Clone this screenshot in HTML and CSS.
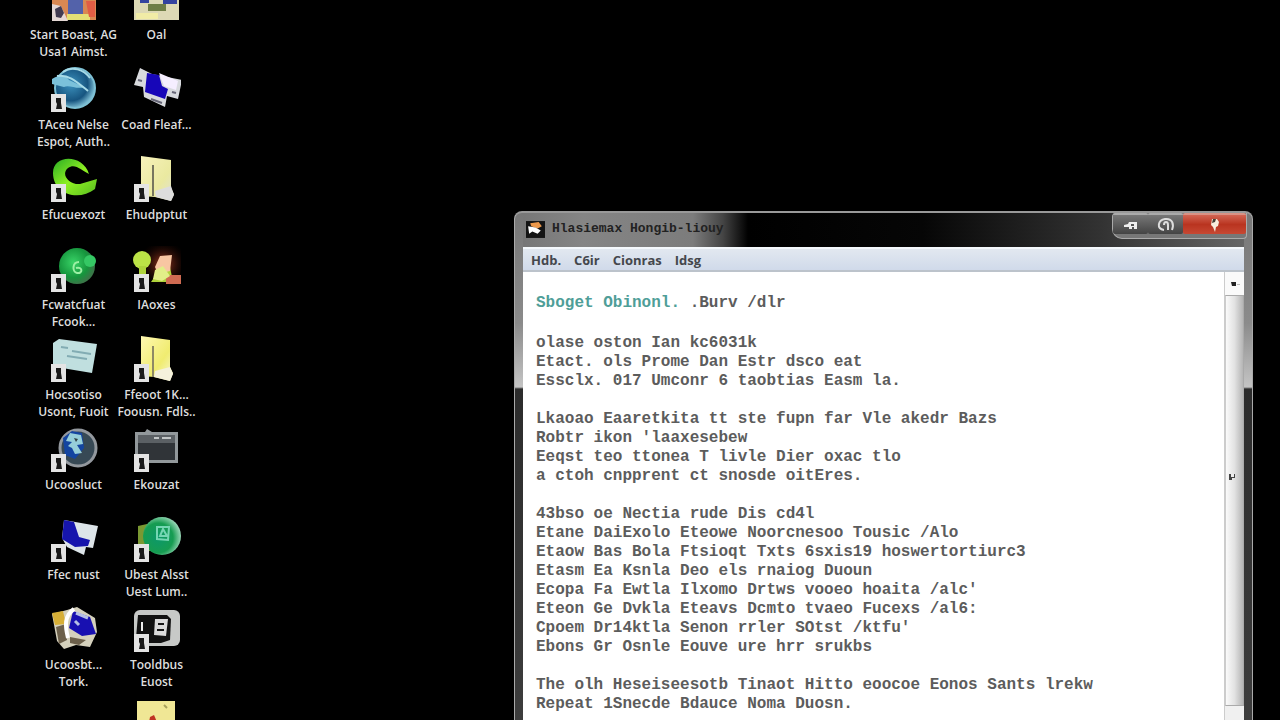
FILE: index.html
```html
<!DOCTYPE html>
<html lang="en">
<head>
<meta charset="utf-8">
<title>Desktop</title>
<link rel="stylesheet" href="styles.css">
</head>
<body>
<svg class="defs" aria-hidden="true">
  <defs>
    <radialGradient id="blue" cx=".4" cy=".4" r=".6"><stop offset="0" stop-color="#3c91bd"/><stop offset=".7" stop-color="#175580"/><stop offset="1" stop-color="#79b9d0"/></radialGradient>
    <radialGradient id="green" cx=".4" cy=".4" r=".6"><stop offset="0" stop-color="#38d266"/><stop offset=".7" stop-color="#16953d"/><stop offset="1" stop-color="#397747"/></radialGradient>
    <radialGradient id="teal" cx=".4" cy=".55" r=".65"><stop offset="0" stop-color="#0c986a"/><stop offset=".6" stop-color="#169c51"/><stop offset="1" stop-color="#b5e4cd"/></radialGradient>
    <radialGradient id="glow"><stop offset="0" stop-color="#a33c22"/><stop offset="1" stop-color="#220500" stop-opacity="0"/></radialGradient>
    <linearGradient id="paper" x2="1" y2="1"><stop offset="0" stop-color="#f7f2bb"/><stop offset=".6" stop-color="#eae9a0"/><stop offset="1" stop-color="#dedfd8"/></linearGradient>
    <linearGradient id="yellow" x2="1" y2="1"><stop offset="0" stop-color="#fff8b2"/><stop offset=".6" stop-color="#f0ec70"/><stop offset="1" stop-color="#f8f7db"/></linearGradient>
    <linearGradient id="lime" x2="1" y2="1"><stop offset="0" stop-color="#2aac24"/><stop offset=".5" stop-color="#8ff022"/><stop offset="1" stop-color="#58bd20"/></linearGradient>
    <g id="arrow"><path fill="#e4e4e4" d="M1 28h15v18H1z"/><path fill="#1b1b1b" d="M6 32h5v5l1 6H6l1-5-1-2z"/></g>
  </defs>
</svg>
<main class="desktop">
  <nav class="icons" aria-label="Desktop icons">
    <button class="item"><svg viewBox="0 0 48 48"><path fill="#d98852" d="M2 20h44v24H2z"/><path fill="#5362aa" d="M18 20h15v18H18z"/><path fill="#e4df75" d="M17 38h23v6H17z"/><path fill="#e5d8d5" d="M2 28l9 2 7 15H2z"/><path fill="#423b51" d="M5 33l6-3 3 7-3 5-5-1z"/><path fill="#e15d45" d="M36 25h9v16h-6z"/></svg><span>Start Boast, AG<br>Usa1 Aimst.</span></button>
    <button class="item"><svg viewBox="0 0 48 48"><path fill="#ddd9b5" d="M1 20h45v24H1z"/><path fill="#34439f" d="M30 20h14v8H30zM7 24h9v3H7z"/><path fill="#6f7e46" d="M15 28h18v7H15z"/><path fill="#f1eca6" d="M3 37h22v6H3z"/></svg><span>Oal</span></button>

    <button class="item"><svg viewBox="0 0 48 48"><circle cx="25" cy="22" r="20" fill="url(#blue)" stroke="#7ec1d5" stroke-width="2"/><path fill="#7bc1da" d="M2 13c8-5 14-4 17 1l15 7c-7 3-15-3-20 0L2 18z"/><path fill="none" stroke="#a7dbe8" stroke-width="2" d="M7 10c12-2 20 6 31 15M13 6c9-7 21-2 27 6"/><use href="#arrow"/></svg><span>TAceu Nelse<br>Espot, Auth..</span></button>
    <button class="item"><svg viewBox="0 0 48 48"><path fill="#d8dade" d="M7 2l12 6 30 6-4 19-11-3-2 11-21-10-1-10-9-2z"/><path fill="#1706b8" d="M14 7l12 2 3 11 6 3-3 10-20-7z"/><path fill="#f5eeff" d="M26 7l19 8-2 9-12-4z"/><path fill="none" stroke="#667" stroke-width="2" d="M5 14l4 1M39 26l4 1M18 33l11 4"/></svg><span>Coad Fleaf...</span></button>

    <button class="item"><svg viewBox="0 0 48 48"><path fill="url(#lime)" d="M39 18C33-2 3-2 3 17c0 21 25 29 42 16l2-10-17 5c-10 1-20-9-12-16 7-5 13 2 21 6z"/><use href="#arrow"/></svg><span>Efucuexozt</span></button>
    <button class="item"><svg viewBox="0 0 48 48"><path fill="url(#paper)" d="M8 0l30 4v28l3 6-3 7-16-4-14-1z"/><path fill="none" stroke="#77765f" stroke-width="2" d="M20 9v31"/><path fill="#ddd" d="M22 35l16-5 3 9-3 6-15-4z"/><use href="#arrow"/></svg><span>Ehudpptut</span></button>

    <button class="item"><svg viewBox="0 0 48 48"><circle cx="27" cy="20" r="18" fill="url(#green)"/><circle cx="40" cy="15" r="6" fill="#35c864"/><path fill="none" stroke="#9cf0a4" stroke-width="2" d="M29 16c-7 0-7 10-2 11 6 1 6-7-1-5"/><use href="#arrow"/></svg><span>Fcwatcfuat<br>Fcook...</span></button>
    <button class="item"><svg viewBox="0 0 48 48"><ellipse cx="30" cy="18" rx="25" ry="23" fill="url(#glow)"/><circle cx="9" cy="14" r="9" fill="#bce346"/><path fill="#afd33b" d="M6 20h7v15H6zM25 26l12-5 3 15H18z"/><path fill="#f8c6a2" d="M27 10l12-1-2 16-12 3-3-7z"/><path fill="#cf6b52" d="M33 29h16v9H33z"/><path fill="#e2ee88" d="M22 24l8-4 7 10-8 5-9-2z"/><use href="#arrow"/></svg><span>IAoxes</span></button>

    <button class="item"><svg viewBox="0 0 48 48"><path fill="#c0dfdf" d="M3 7l6-4 38 5-5 29-24-4L3 30z"/><path fill="none" stroke="#82acb3" stroke-width="2" d="M11 11l7 1M22 15l19 3M17 20l20 3"/><use href="#arrow"/></svg><span>Hocsotiso<br>Usont, Fuoit</span></button>
    <button class="item"><svg viewBox="0 0 48 48"><path fill="url(#yellow)" d="M8 0l29 4v27l3 6-3 8-16-4-13-1z"/><path fill="none" stroke="#8e8965" stroke-width="2" d="M20 10v31"/><path fill="#f5f2dc" d="M22 35l15-4 3 7-3 7-16-4z"/><use href="#arrow"/></svg><span>Ffeoot 1K...<br>Foousn. Fdls..</span></button>

    <button class="item"><svg viewBox="0 0 48 48"><circle cx="28" cy="22" r="18" fill="#374955" stroke="#93989e" stroke-width="3"/><path fill="#1445a0" d="M13 12l9-7 10 2 2 15-9 11-10-4z"/><path fill="#96ced9" d="M20 7l11 2 2 9-6 1 5 8-7 1-3-6-4-2 4-4-6-1z"/><path fill="#304044" d="M24 12l4 1-2 3z"/><use href="#arrow"/></svg><span>Ucoosluct</span></button>
    <button class="item"><svg viewBox="0 0 48 48"><path fill="#92989b" d="M2 6h10l2-3 5 3h26v31H2z"/><path fill="#303438" d="M5 13h37v21H5z"/><path fill="#5b6064" d="M5 9h37v8H5z"/><path stroke="#c2c5c6" stroke-width="2" d="M21 12h5M29 12h9"/><use href="#arrow"/></svg><span>Ekouzat</span></button>

    <button class="item"><svg viewBox="0 0 48 48"><path fill="#dde5e9" d="M14 4l34 6-5 22-7-1-2 8-17-8-5-9z"/><path fill="#1615ad" d="M14 4l10 2 5 15 11 3-2 6-13 1-13-8z"/><use href="#arrow"/></svg><span>Ffec nust</span></button>
    <button class="item"><svg viewBox="0 0 48 48"><path fill="#7a9832" d="M5 10l9-2 10 5 1 22H5z"/><circle cx="29" cy="20" r="19" fill="url(#teal)"/><path fill="none" stroke="#75d6b3" stroke-width="2" d="M24 11h12l-1 13-11-1zM30 13l-3 7h7z"/><use href="#arrow"/></svg><span>Ubest Alsst<br>Uest Lum..</span></button>

    <button class="item"><svg viewBox="0 0 48 48"><path fill="#d5d1bd" d="M2 8l15-4 10-3 18 11 2 14-7 15-14-2-12 4-7-8z"/><path fill="#d7af37" d="M2 7l11-2 3 13-11 1z"/><path fill="#1810b1" d="M23 5l17 6 6 17-14 2-13-8z"/><path fill="#6c604b" d="M6 21l10-3 1 16-8 4zM20 31l16 3-7 5-9-2z"/><path fill="none" stroke="#fff" stroke-width="4" d="M24 3c-10 7-9 17-6 29"/><path fill="none" stroke="#b5bfe6" stroke-width="3" d="M26 7l12 5M25 15l4 4"/></svg><span>Ucoosbt...<br>Tork.</span></button>
    <button class="item"><svg viewBox="0 0 48 48"><rect x="1" y="4" width="46" height="36" rx="6" fill="#c7c9c7"/><path fill="#111" d="M5 9h29l4 4-1 21-9 3H8l-5-5z"/><path fill="#dadada" d="M22 13h13l-2 17-12-1z"/><path fill="#151515" d="M25 17h6v2h-6zM24 23h7v2h-7z"/><path fill="none" stroke="#eee" stroke-width="2" d="M9 16v9"/><use href="#arrow"/></svg><span>Tooldbus<br>Euost</span></button>

    <i></i>
    <button class="item" aria-label="Note"><svg viewBox="0 0 48 48"><path fill="#f0e795" d="M4 5h38v43H4z"/><path fill="#bf3424" d="M17 21l4-2 3 7h-8z"/><path fill="none" stroke="#a8a05b" stroke-width="2" d="M31 9l3 3"/></svg></button>
  </nav>

  <section class="window" aria-label="Console">
    <header class="titlebar">
      <div class="caption">
        <svg class="appicon" viewBox="0 0 18 16"><path fill="#141414" d="M0 0h18v16H0z"/><path fill="#ee994b" d="M4 2l8-1 3 4-4 2-6-2z"/><path fill="#fff" d="M2 5l7 1 5 3-3 3-5-2-3 2z"/></svg>
        <h1>Hlasiemax Hongib-liouy</h1>
      </div>
      <div class="controls">
        <button aria-label="Minimize"><svg viewBox="0 0 18 16"><path fill="#eee" d="M2 8l4-1 1-2h8v7h-3v-2h-2v2H7v-2H2z"/><path fill="#555" d="M9 7h3v2H9z"/></svg></button>
        <button aria-label="Maximize"><svg viewBox="0 0 18 16"><path fill="none" stroke="#ddd" stroke-width="2" d="M7 13C-1 12 1 3 8 2c8-1 9 6 7 11M7 8c0-4 4-4 4 0v5"/></svg></button>
        <button class="close" aria-label="Close"><svg viewBox="0 0 18 16"><path fill="#f8eddd" d="M6 2h5l2 3-1 4-2 1-1 5-2-5-2-2z"/><path fill="#464036" d="M7 2h3L9 5 6 6z"/></svg></button>
      </div>
    </header>
    <div class="client">
      <nav class="menu" aria-label="Menu"><button>Hdb.</button><button>C6ir</button><button>Cionras</button><button>Idsg</button></nav>
      <div class="view">
        <div class="document">
<p class="heading"><span>Sboget Obinonl.</span> .Burv /dlr</p>
<pre>olase oston Ian kc6031k
Etact. ols Prome Dan Estr dsco eat
Essclx. 017 Umconr 6 taobtias Easm la.

Lkaoao Eaaretkita tt ste fupn far Vle akedr Bazs
Robtr ikon 'laaxesebew
Eeqst teo ttonea T livle Dier oxac tlo
a ctoh cnpprent ct snosde oitEres.

43bso oe Nectia rude Dis cd4l
Etane DaiExolo Eteowe Noorcnesoo Tousic /Alo
Etaow Bas Bola Ftsioqt Txts 6sxis19 hoswertortiurc3
Etasm Ea Ksnla Deo els rnaiog Duoun
Ecopa Fa Ewtla Ilxomo Drtws vooeo hoaita /alc'
Eteon Ge Dvkla Eteavs Dcmto tvaeo Fucexs /al6:
Cpoem Dr14ktla Senon rrler SOtst /ktfu'
Ebons Gr Osnle Eouve ure hrr srukbs

The olh Heseiseesotb Tinaot Hitto eoocoe Eonos Sants lrekw
Repeat 1Snecde Bdauce Noma Duosn.</pre>
        </div>
        <div class="scrollbar">
          <button class="up" aria-label="Scroll up"><svg viewBox="0 0 10 6"><path fill="#222" d="M1 1h5v4H2z"/><path fill="#bbb" d="M7 3h3v1H7z"/></svg></button>
          <div class="thumb"><svg viewBox="0 0 8 8"><path fill="#444" d="M1 2h6v4H4v2H1z"/><path fill="#eee" d="M3 2h3v3H3z"/></svg></div>
          <div class="down"></div>
        </div>
      </div>
    </div>
  </section>
</main>
</body>
</html>
```
FILE: styles.css
```css
* { box-sizing: border-box; }
body { margin: 0; background: #000; font-family: "Liberation Sans", Arial, sans-serif; }
button { margin: 0; padding: 0; border: 0; background: none; color: inherit; font: inherit; }
svg { display: block; }
.defs { position: absolute; width: 0; height: 0; }
.desktop { position: relative; height: 100vh; overflow: hidden; }

.icons {
  display: grid;
  grid-template-columns: repeat(2, 83px);
  grid-auto-rows: 90px;
  width: max-content;
  margin: -24px 0 0 32px;
}
.item {
  display: flex;
  flex-direction: column;
  align-items: center;
  gap: 2px;
  color: #dedede;
  font-family: "Open Sans", "Noto Sans", sans-serif;
  font-size: 12px;
  font-weight: 600;
  line-height: 17px;
  white-space: nowrap;
}
.item svg { flex: none; width: 48px; height: 48px; }

.window {
  position: absolute;
  top: 211px;
  left: 514px;
  right: 27px;
  padding: 0 8px 8px;
  border: 1px solid #aaa;
  border-top: 2px solid #999;
  border-radius: 8px 8px 0 0;
  background: linear-gradient(#777 0, #8b8b8b 110px, #c4c4c4 174px, #2c2c2c 176px, #3e3e3e 100%);
}
.titlebar {
  display: flex;
  justify-content: space-between;
  align-items: flex-start;
  height: 34px;
  background: linear-gradient(90deg, #777 0, #858585 60px, #7c7c7c 170px, #444 200px, #000 225px, #060606 400px, #333 580px, #666 100%);
}
.caption { display: flex; align-items: center; gap: 7px; padding: 4px 0 0 3px; }
.appicon { width: 19px; height: 17px; }
h1 {
  margin: 0;
  color: #222;
  font-family: "Liberation Mono", monospace;
  font-size: 13px;
  font-weight: 700;
  line-height: 24px;
}
.controls {
  display: flex;
  height: 26px;
  margin-right: -3px;
  padding-bottom: 4px;
  border: 1px solid #aaa;
  border-top: 0;
  border-radius: 4px 0 4px 10px;
  background: #777;
}
.controls button {
  display: grid;
  place-items: center;
  width: 35px;
  border-top: 2px solid #aaa;
  border-radius: 2px;
  background: linear-gradient(#777, #444);
}
.controls svg { width: 18px; height: 16px; }
.controls .close { width: 63px; border-top-color: #d99184; background: linear-gradient(#d26452, #b93420 50%, #c74833); }

.client { background: #fff; }
.menu {
  display: flex;
  gap: 13px;
  height: 25px;
  padding-left: 8px;
  border-top: 2px solid #f4f8fc;
  border-bottom: 2px solid #bcc3cb;
  background: linear-gradient(#e2e8f0, #d0daea);
  color: #44474c;
  font-family: "Open Sans", "Noto Sans", sans-serif;
  font-size: 13px;
  font-weight: 700;
  line-height: 20px;
}
.view { display: flex; }
.document {
  flex: 1;
  min-width: 0;
  padding: 22px 0 24px 13px;
  color: #5c5c5c;
  font-family: "Liberation Mono", monospace;
  font-size: 16px;
  font-weight: 700;
  line-height: 19px;
}
.heading { margin: 0 0 21px; white-space: pre; }
.heading span { color: #4f9e98; }
pre { margin: 0; font: inherit; }
.scrollbar {
  display: flex;
  flex-direction: column;
  width: 20px;
  border-left: 1px solid #ccc;
  background: #f0f0f0;
}
.up { display: grid; place-items: center; height: 23px; background: #fafafa; }
.up svg { width: 10px; height: 6px; }
.thumb {
  display: grid;
  flex: 1;
  align-items: center;
  padding: 0 0 50px 2px;
  border: 1px solid #aaa;
  border-left-color: #ccc;
  background: linear-gradient(90deg, #fafafa, #e2e2e2 50%, #b5b5b5);
}
.thumb svg { width: 8px; height: 8px; }
.down { height: 32px; }
```
